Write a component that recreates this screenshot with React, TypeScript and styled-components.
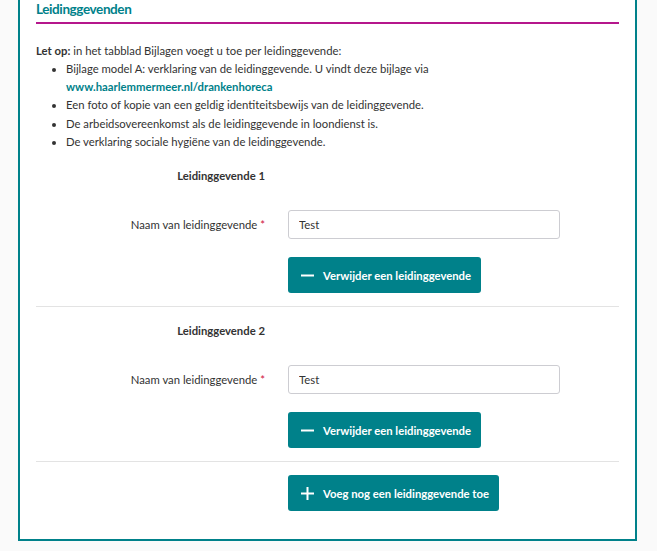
import React, { useState } from "react";
import styled, { createGlobalStyle } from "styled-components";

const GlobalStyle = createGlobalStyle`
  body {
    margin: 0;
    background: #fafafa;
    font-family: "Lato", "Open Sans", sans-serif;
    color: #333;
  }
`;

const teal = "#00818a";

const Panel = styled.section`
  margin-left: 18px;
  width: 583px;
  background: #fff;
  border: 2px solid ${teal};
  border-top: none;
  padding: 0 16px 28px 16px;
`;

const Heading = styled.h2`
  margin: 0;
  padding: 0 0 4px;
  font-size: 13.5px;
  line-height: 18px;
  font-weight: 700;
  color: ${teal};
  letter-spacing: -0.4px;
  border-bottom: 2px solid #b5178c;
`;

const Intro = styled.div`
  margin-top: 18px;
  font-size: 11.3px;
  line-height: 18px;
  color: #333;

  p {
    margin: 0;
  }

  strong {
    font-weight: 700;
  }
`;

const List = styled.ul`
  margin: 0;
  padding-left: 30px;

  li {
    line-height: 18.2px;
  }
`;

const ExternalLink = styled.a`
  color: ${teal};
  font-weight: 700;
  text-decoration: none;
`;

const Section = styled.div<{ $first?: boolean }>`
  display: grid;
  grid-template-columns: 229px 272px;
  column-gap: 23px;
  padding: ${(p) => (p.$first ? "16px" : "15px")} 0 13px;
  border-bottom: 1px solid #e3e3e3;
`;

const SectionTitle = styled.div`
  grid-column: 1;
  text-align: right;
  font-size: 11.3px;
  line-height: 18px;
  font-weight: 700;
  color: #333;
`;

const FieldRow = styled.div`
  grid-column: 1 / span 2;
  display: grid;
  grid-template-columns: subgrid;
  align-items: center;
  margin-top: 25px;
`;

const Label = styled.label`
  text-align: right;
  font-size: 11.3px;
  color: #333;

  span {
    color: #d0103a;
  }
`;

const Input = styled.input`
  box-sizing: border-box;
  height: 29px;
  width: 272px;
  border: 1px solid #cdcdd2;
  border-radius: 3px;
  padding: 0 10px;
  font-family: inherit;
  font-size: 11.3px;
  color: #333;
  outline: none;
`;

const Button = styled.button<{ $top?: number }>`
  grid-column: 2;
  justify-self: start;
  display: inline-flex;
  align-items: center;
  gap: 8px;
  height: 36px;
  margin-top: ${(p) => p.$top ?? 18}px;
  padding: 0 10px 0 12px;
  background: ${teal};
  color: #fff;
  border: none;
  border-radius: 3px;
  font-family: inherit;
  font-size: 11.3px;
  font-weight: 700;
  cursor: pointer;

  svg {
    flex: none;
  }
`;

const AddRow = styled.div`
  display: grid;
  grid-template-columns: 229px auto;
  column-gap: 23px;
`;

const MinusIcon = () => (
  <svg width="15" height="15" viewBox="0 0 15 15">
    <path d="M1 7.5h13" stroke="#fff" strokeWidth="2" />
  </svg>
);

const PlusIcon = () => (
  <svg width="15" height="15" viewBox="0 0 15 15">
    <path d="M1 7.5h13M7.5 1v13" stroke="#fff" strokeWidth="2" />
  </svg>
);

const App: React.FC = () => {
  const [names, setNames] = useState<string[]>(["Test", "Test"]);

  const update = (i: number, v: string) =>
    setNames((prev) => prev.map((n, j) => (j === i ? v : n)));

  return (
    <>
      <GlobalStyle />
      <Panel>
        <Heading>Leidinggevenden</Heading>
        <Intro>
          <p>
            <strong>Let op:</strong> in het tabblad Bijlagen voegt u toe per
            leidinggevende:
          </p>
          <List>
            <li>
              Bijlage model A: verklaring van de leidinggevende. U vindt deze
              bijlage via
              <br />
              <ExternalLink href="#">
                www.haarlemmermeer.nl/drankenhoreca
              </ExternalLink>
            </li>
            <li>
              Een foto of kopie van een geldig identiteitsbewijs van de
              leidinggevende.
            </li>
            <li>De arbeidsovereenkomst als de leidinggevende in loondienst is.</li>
            <li>De verklaring sociale hygiëne van de leidinggevende.</li>
          </List>
        </Intro>

        {names.map((name, i) => (
          <Section key={i} $first={i === 0}>
            <SectionTitle>Leidinggevende {i + 1}</SectionTitle>
            <FieldRow>
              <Label htmlFor={`naam-${i}`}>
                Naam van leidinggevende <span>*</span>
              </Label>
              <Input
                id={`naam-${i}`}
                value={name}
                onChange={(e) => update(i, e.target.value)}
              />
            </FieldRow>
            <Button
              type="button"
              onClick={() => setNames((prev) => prev.filter((_, j) => j !== i))}
            >
              <MinusIcon />
              Verwijder een leidinggevende
            </Button>
          </Section>
        ))}

        <AddRow>
          <Button
            type="button"
            $top={13}
            onClick={() => setNames((prev) => [...prev, ""])}
          >
            <PlusIcon />
            Voeg nog een leidinggevende toe
          </Button>
        </AddRow>
      </Panel>
    </>
  );
};

export default App;
